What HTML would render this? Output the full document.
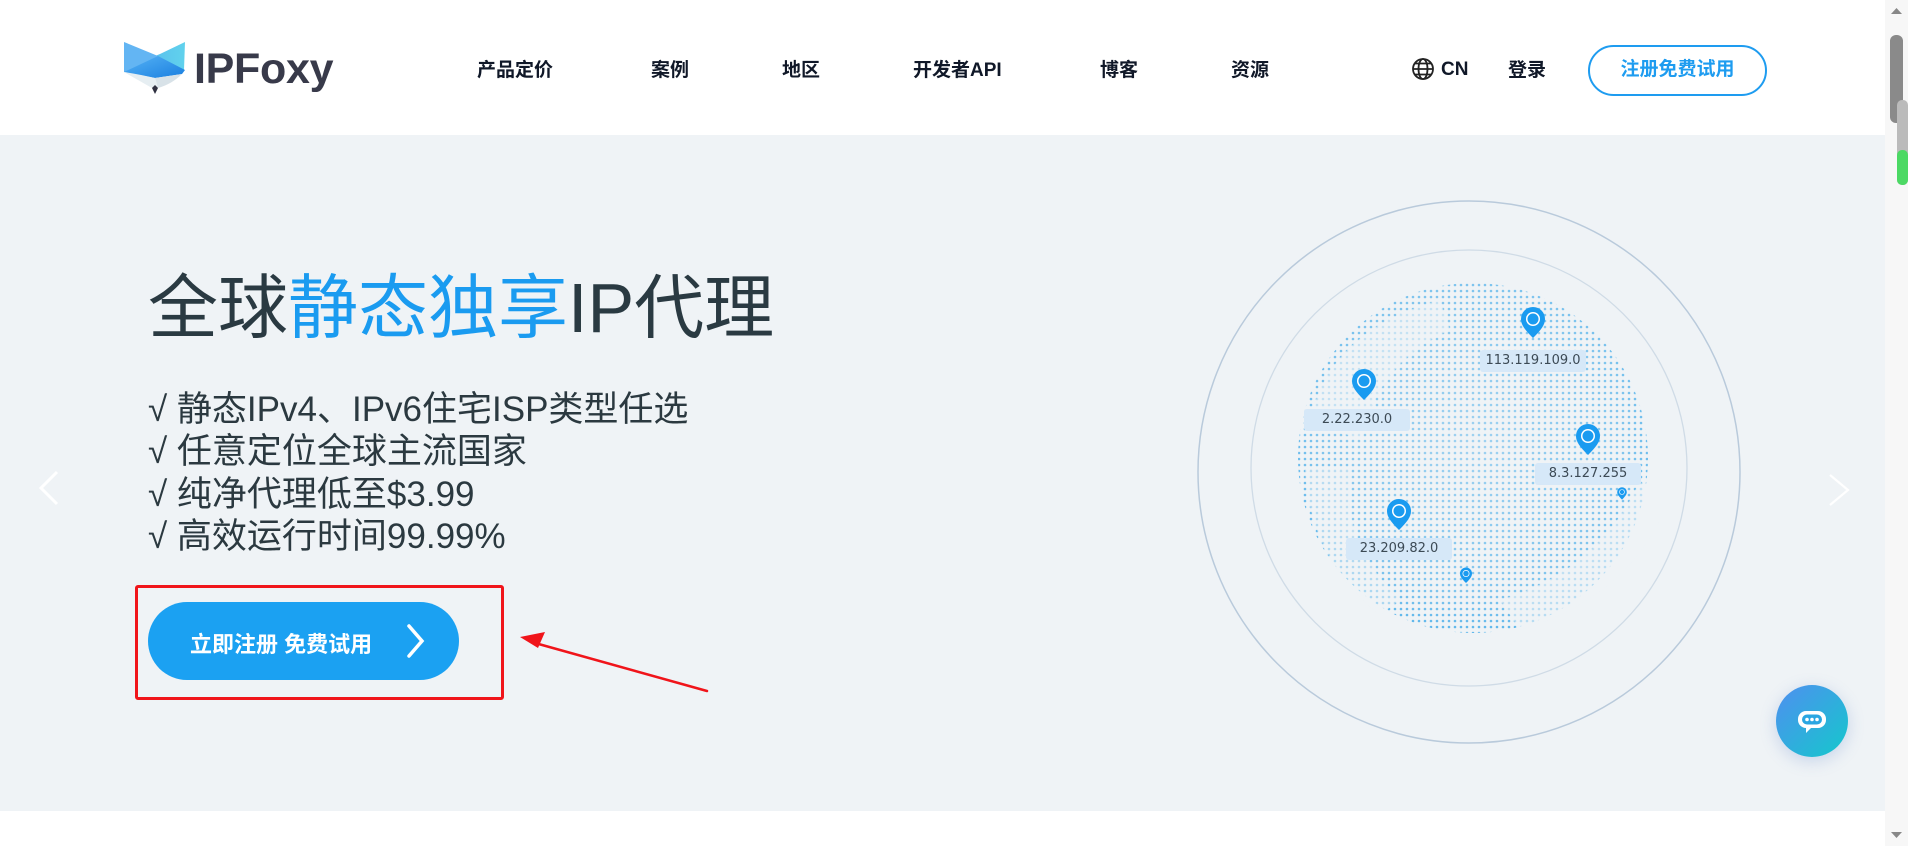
<!DOCTYPE html>
<html><head><meta charset="utf-8">
<style>
*{margin:0;padding:0;box-sizing:border-box}
html,body{width:1908px;height:846px;overflow:hidden;background:#fff;font-family:"Liberation Sans","Noto Sans CJK SC",sans-serif}
#page{position:absolute;left:0;top:0;width:1885px;height:846px;background:#fff;border-radius:10px 0 0 0;overflow:hidden}
.hdr{position:absolute;left:0;top:0;width:1885px;height:135px;background:#fff}
.nav{position:absolute;top:55px;font-size:19px;font-weight:bold;color:#101828;white-space:nowrap;font-family:"Liberation Sans","Noto Sans CJK SC",sans-serif}
.hero{position:absolute;left:0;top:135px;width:1885px;height:676px;background:#eff3f6}
.abs{position:absolute}
.bul{position:absolute;left:148px;font-size:35px;color:#2b3940;font-family:"Liberation Sans","Noto Sans CJK SC",sans-serif;white-space:nowrap;line-height:40px}
.lab{position:absolute;height:22px;width:106px;background:#d6e8f8;border-radius:3px;font-size:13px;color:#3c4a55;text-align:center;line-height:22px;font-family:"DejaVu Sans",sans-serif}
</style></head><body>
<div id="page">
<div class="hdr">
  <svg class="abs" style="left:124px;top:42px" width="62" height="52" viewBox="0 0 62 52">
    <defs><linearGradient id="lg1" x1="0" y1="0" x2="1" y2="1"><stop offset="0" stop-color="#56b3f5"/><stop offset="1" stop-color="#1a7fe0"/></linearGradient>
    <linearGradient id="lg2" x1="0" y1="0" x2="1" y2="0"><stop offset="0" stop-color="#2aa0ea"/><stop offset="1" stop-color="#39c6e8"/></linearGradient></defs>
    <path d="M0 0 L26 12 L31 14 L36 12 L61 0 L60 28 L31 14 Z" fill="url(#lg2)" opacity=".8"/>
    <path d="M0 0 L0 30 L16 34 L34 14 Z" fill="#63b5f3"/>
    <path d="M0 30 L34 14 L61 28 L58 32 L31 36 Z" fill="url(#lg1)"/>
    <path d="M0 30 Q14 32 31 36 L34 46 L31 50 L28 46 Z" fill="#e6eef2"/>
    <path d="M58 32 L31 36 L34 46 Q48 42 58 32 Z" fill="#d8e2e8"/>
    <path d="M28 46 L31 52 L34 46 L31 43 Z" fill="#2f3040"/>
  </svg>
  <div class="abs" style="left:194px;top:45px;font-size:43px;font-weight:bold;color:#383a4a;letter-spacing:-0.3px">IPFoxy</div>
  <div class="nav" style="left:477px">产品定价</div>
  <div class="nav" style="left:651px">案例</div>
  <div class="nav" style="left:782px">地区</div>
  <div class="nav" style="left:913px">开发者API</div>
  <div class="nav" style="left:1100px">博客</div>
  <div class="nav" style="left:1231px">资源</div>
  <svg class="abs" style="left:1411px;top:57px" width="24" height="24" viewBox="0 0 24 24" fill="none" stroke="#222" stroke-width="1.8"><circle cx="12" cy="12" r="10"/><ellipse cx="12" cy="12" rx="4.5" ry="10"/><path d="M2 12h20M4 6.5h16M4 17.5h16"/></svg>
  <div class="nav" style="left:1441px;top:59px">CN</div>
  <div class="nav" style="left:1508px">登录</div>
  <div class="abs" style="left:1588px;top:45px;width:179px;height:51px;border:2.5px solid #1e9cf0;border-radius:26px;color:#1e9cf0;font-size:19px;font-weight:bold;text-align:center;line-height:46px">注册免费试用</div>
</div>
<div class="hero">
  <svg class="abs" style="left:39px;top:335px" width="20" height="38" viewBox="0 0 20 38"><path d="M18 2 L2 18 L18 34" stroke="#fff" stroke-width="3" fill="none"/></svg>
  <svg class="abs" style="left:1828px;top:338px" width="22" height="34" viewBox="0 0 22 34"><path d="M2 2 L20 17 L2 32" stroke="#fff" stroke-width="2.2" fill="none"/></svg>
  <svg class="abs" style="left:1180px;top:55px" width="580" height="580" viewBox="1180 190 580 580">
    <defs>
      <pattern id="dots" x="0" y="0" width="6" height="6" patternUnits="userSpaceOnUse"><circle cx="3" cy="3" r="1.3" fill="#4fb0ea"/></pattern>
      <radialGradient id="fade" cx="0.5" cy="0.45" r="0.55"><stop offset="0" stop-color="#fff" stop-opacity=".5"/><stop offset=".8" stop-color="#fff" stop-opacity=".7"/><stop offset="1" stop-color="#fff" stop-opacity=".9"/></radialGradient>
      <mask id="m"><circle cx="1473" cy="458" r="175" fill="url(#fade)"/></mask>
    </defs>
    <circle cx="1469" cy="472" r="271" fill="none" stroke="#b9cadb" stroke-width="1.5"/>
    <circle cx="1469" cy="468" r="218" fill="none" stroke="#cfdbe6" stroke-width="1.3"/>
    <g mask="url(#m)"><rect x="1290" y="280" width="370" height="360" fill="url(#dots)"/></g>
    <path d="M1310 420 Q1330 330 1440 300 L1450 330 Q1380 360 1360 440 Z" fill="#eff3f6" opacity=".6"/>
    <path d="M1305 470 Q1310 560 1380 615 L1400 600 Q1340 540 1350 470 Z" fill="#eff3f6" opacity=".5"/>
    <path d="M1500 600 Q1600 570 1640 480 L1660 520 Q1620 600 1520 630 Z" fill="#eff3f6" opacity=".6"/>
  </svg>
  <div class="lab" style="left:1480px;top:215px">113.119.109.0</div>
  <div class="lab" style="left:1304px;top:274px">2.22.230.0</div>
  <div class="lab" style="left:1535px;top:328px">8.3.127.255</div>
  <div class="lab" style="left:1346px;top:403px">23.209.82.0</div>
  <svg class="abs" style="left:0;top:0" width="1885" height="676" viewBox="0 135 1885 676">
    <defs><g id="pin"><path d="M0 14 C-8 6 -12 1 -12 -5 A12 12 0 1 1 12 -5 C12 1 8 6 0 14Z" fill="#1a9bf0"/><circle cx="0" cy="-5" r="7" fill="#fff"/><circle cx="0" cy="-5" r="5.5" fill="#1a9bf0"/></g></defs>
    <use href="#pin" x="1533" y="324"/>
    <use href="#pin" x="1364" y="386"/>
    <use href="#pin" x="1588" y="441"/>
    <use href="#pin" x="1399" y="516"/>
    <use href="#pin" transform="translate(1466 576) scale(.5)"/>
    <use href="#pin" transform="translate(1622 494) scale(.4)"/>
  </svg>
  <div class="abs" style="left:148px;top:128px;font-size:70px;color:#2a3a42;white-space:nowrap;font-family:'Liberation Sans','Noto Sans CJK SC',sans-serif;line-height:90px">全球<span style="color:#1a9bf0">静态独享</span>IP代理</div>
  <div class="bul" style="top:255px">√ 静态IPv4、IPv6住宅ISP类型任选</div>
  <div class="bul" style="top:297px">√ 任意定位全球主流国家</div>
  <div class="bul" style="top:340px">√ 纯净代理低至$3.99</div>
  <div class="bul" style="top:382px">√ 高效运行时间99.99%</div>
  <div class="abs" style="left:148px;top:467px;width:311px;height:78px;background:#1ba1f2;border-radius:39px"></div>
  <div class="abs" style="left:190px;top:492px;font-size:22px;font-weight:bold;color:#fff;white-space:nowrap">立即注册 免费试用</div>
  <svg class="abs" style="left:406px;top:488px" width="20" height="36" viewBox="0 0 20 36"><path d="M3 3 L16 18 L3 33" stroke="#fff" stroke-width="3.5" fill="none" stroke-linecap="round"/></svg>
  <div class="abs" style="left:135px;top:450px;width:369px;height:115px;border:3px solid #f0141a;border-radius:3px"></div>
  <svg class="abs" style="left:0;top:0" width="1885" height="676" viewBox="0 135 1885 676">
    <path d="M707 691 L535 643" stroke="#f0141a" stroke-width="2.5" stroke-linecap="round"/>
    <path d="M520 637 L545 632 L538 648 Z" fill="#f0141a"/>
  </svg>
  <div class="abs" style="left:1776px;top:550px;width:72px;height:72px;border-radius:50%;background:linear-gradient(135deg,#4f8ff0,#14c8cc);box-shadow:0 4px 16px rgba(80,120,200,.25)"></div>
  <svg class="abs" style="left:1794px;top:568px" width="36" height="36" viewBox="0 0 36 36"><rect x="4" y="8" width="28" height="17" rx="8" fill="#fff"/><path d="M12 24 L12 30 L18 24Z" fill="#fff"/><rect x="8" y="11.5" width="20" height="10" rx="5" fill="#2aa6e2"/><circle cx="13" cy="16.5" r="1.8" fill="#fff"/><circle cx="18" cy="16.5" r="1.8" fill="#fff"/><circle cx="23" cy="16.5" r="1.8" fill="#fff"/></svg>
</div>
</div>
<div class="abs" style="left:1885px;top:0;width:23px;height:846px;background:#f7f7f7"></div>
<svg class="abs" style="left:1885px;top:0" width="23" height="846">
  <path d="M6 14 L11.5 8 L17 14Z" fill="#888"/>
  <rect x="5" y="35" width="13" height="88" rx="6" fill="#8a8a8a"/>
  <rect x="12" y="100" width="11" height="85" rx="5" fill="#bbb"/>
  <rect x="12" y="150" width="11" height="35" rx="5" fill="#4cd964"/>
  <path d="M6 832 L11.5 838 L17 832Z" fill="#888"/>
</svg>
</body></html>
